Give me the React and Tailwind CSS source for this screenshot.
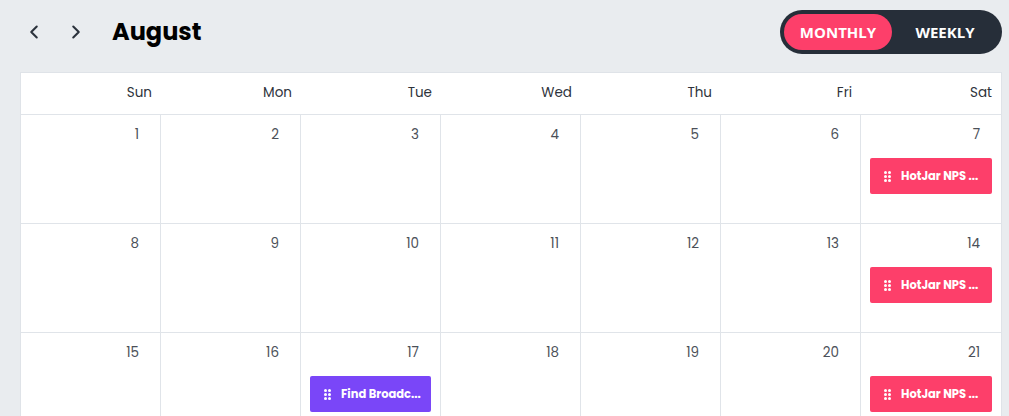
import { ChevronLeft, ChevronRight } from 'lucide-react';

const days = ['Sun', 'Mon', 'Tue', 'Wed', 'Thu', 'Fri', 'Sat'];

const weeks = [
  [1, 2, 3, 4, 5, 6, 7],
  [8, 9, 10, 11, 12, 13, 14],
  [15, 16, 17, 18, 19, 20, 21],
];

const events = {
  7: { title: 'HotJar NPS ...', color: 'bg-[#fd3f6a]' },
  14: { title: 'HotJar NPS ...', color: 'bg-[#fd3f6a]' },
  21: { title: 'HotJar NPS ...', color: 'bg-[#fd3f6a]' },
  17: { title: 'Find Broadc...', color: 'bg-[#7a46f8]' },
};

function DragDots() {
  return (
    <svg width="7" height="11" viewBox="0 0 7 11" className="shrink-0">
      {[1.5, 5.5].map((x) =>
        [1.5, 5.5, 9.5].map((y) => <circle key={`${x}-${y}`} cx={x} cy={y} r="1.5" fill="white" />)
      )}
    </svg>
  );
}

function EventChip({ title, color }) {
  return (
    <div className={`${color} mx-[9px] mt-[13px] h-9 rounded-[2px] flex items-center gap-[10px] pl-[14px] text-white text-[11.5px] font-bold whitespace-nowrap`}>
      <DragDots />
      <span>{title}</span>
    </div>
  );
}

function DayCell({ day, last }) {
  const ev = events[day];
  return (
    <div className={`h-[108px] ${last ? '' : 'border-r border-[#e0e4e9]'}`}>
      <div className="pt-[10px] pr-[21px] text-right text-[13.5px] text-[#4b5058]">{day}</div>
      {ev && <EventChip title={ev.title} color={ev.color} />}
    </div>
  );
}

export default function App() {
  return (
    <div className="min-h-screen bg-[#e9ecef] pl-5 pr-[7px]" style={{ fontFamily: 'Poppins, Inter, "Noto Sans", sans-serif' }}>
      <header className="h-[64px] flex items-center justify-between">
        <div className="flex items-center">
          <button className="w-6 h-6 ml-[2px] flex items-center justify-center text-[#2b323c]">
            <ChevronLeft className="w-[22px] h-[22px]" strokeWidth={2.25} />
          </button>
          <button className="w-6 h-6 ml-[18px] flex items-center justify-center text-[#2b323c]">
            <ChevronRight className="w-[22px] h-[22px]" strokeWidth={2.25} />
          </button>
          <h1 className="ml-[24px] text-[24px] font-bold text-black">August</h1>
        </div>
        <div className="flex items-center bg-[#262e39] rounded-full p-1 h-[44px] w-[222px]" style={{ fontFamily: '"Open Sans", sans-serif' }}>
          <button className="h-9 w-[108px] rounded-full bg-[#fd3f6a] text-white font-bold text-[15px]">MONTHLY</button>
          <button className="h-9 flex-1 text-white font-bold text-[15px]">WEEKLY</button>
        </div>
      </header>
      <div className="mt-2 bg-white border border-[#dfe3e8] border-b-0">
        <div className="grid grid-cols-7 h-[42px] border-b border-[#e0e4e9]">
          {days.map((d) => (
            <div key={d} className="flex items-center justify-end pr-[9px] text-[13.5px] text-[#2e333b]">
              {d}
            </div>
          ))}
        </div>
        {weeks.map((w, i) => (
          <div key={i} className="grid grid-cols-7 border-b border-[#e0e4e9]">
            {w.map((d, j) => (
              <DayCell key={d} day={d} last={j === 6} />
            ))}
          </div>
        ))}
      </div>
    </div>
  );
}
